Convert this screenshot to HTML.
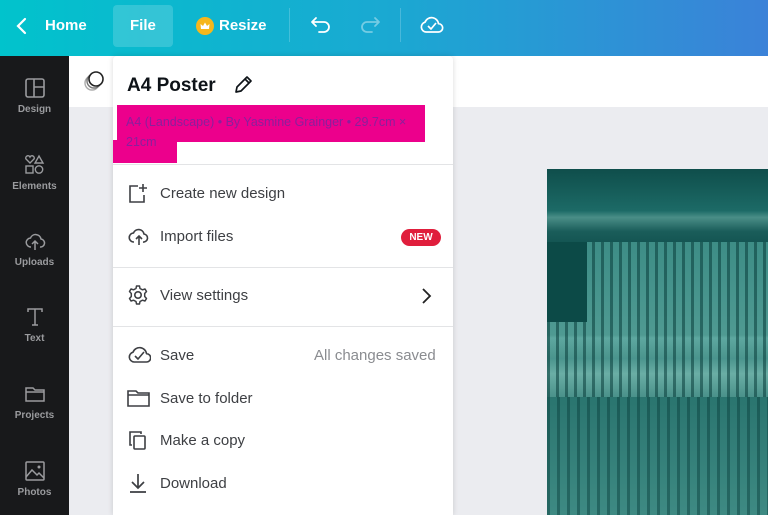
<!DOCTYPE html>
<html><head><style>
*{margin:0;padding:0;box-sizing:border-box}
body{width:768px;height:515px;overflow:hidden;font-family:"Liberation Sans",sans-serif;background:#ebecf0;position:relative}
.top{position:absolute;left:0;top:0;width:768px;height:56px;background:linear-gradient(90deg,#01c3cc 0%,#1aa9d2 50%,#3b82d8 100%)}
.top .t{position:absolute;color:#fff;font-weight:bold;font-size:15px;top:17px}
.side{position:absolute;left:0;top:56px;width:69px;height:459px;background:#18191b}
.si{position:absolute;left:0;width:69px;text-align:center;color:#9a9b9e;font-size:10px;font-weight:bold}
.si svg{display:block;margin:0 auto 4px}
.bar{position:absolute;left:69px;top:56px;width:699px;height:51px;background:#fff}
.img{position:absolute;left:547px;top:169px;width:221px;height:346px;overflow:hidden;background:linear-gradient(180deg,#0f4e4b 0%,#1c6a66 12%,#4a8e87 14%,#1a5d5a 18%,#0b4a47 26%,#2d7a74 28%)}
.roll{position:absolute;left:0;top:73px;width:221px;height:155px;background:
repeating-linear-gradient(90deg,rgba(8,60,58,.55) 0 3px,rgba(255,255,255,0) 3px 9px),
linear-gradient(180deg,#3d8d86 0%,#4f9a92 60%,#5ea8a0 62%,#4a948d 75%,#6aaea5 85%,#4a918a 100%)}
.roll2{position:absolute;left:0;top:228px;width:221px;height:118px;background:
repeating-linear-gradient(90deg,rgba(8,60,58,.45) 0 3px,rgba(255,255,255,0) 3px 10px),
linear-gradient(180deg,#2a756f,#3e8a83)}
.menu{position:absolute;left:113px;top:56px;width:340px;height:459px;background:#fff;box-shadow:0 0 6px rgba(0,0,0,.15);border-radius:4px 4px 0 0}
.it{position:absolute;left:0;width:340px;height:24px;font-size:15px;color:#3d3f43}
.it svg{position:absolute;left:14px;top:0}
.it span{position:absolute;left:47px;top:3px}
.hr{position:absolute;left:0;width:340px;height:1px;background:#e3e4e6}
</style></head><body>
<div class="top">
<svg style="position:absolute;left:15px;top:16px" width="14" height="20" viewBox="0 0 14 20"><path d="M10 3 L3 10 L10 17" fill="none" stroke="#fff" stroke-width="2.2" stroke-linecap="round"/></svg>
<div class="t" style="left:45px">Home</div>
<div style="position:absolute;left:113px;top:5px;width:60px;height:42px;background:rgba(255,255,255,.17);border-radius:4px"></div>
<div class="t" style="left:130px">File</div>
<div style="position:absolute;left:196px;top:17px;width:18px;height:18px;border-radius:50%;background:#f6b71c"><svg width="18" height="18" viewBox="0 0 18 18"><path d="M5 12 L4.5 7 L7 9 L9 5.5 L11 9 L13.5 7 L13 12Z" fill="#fff"/></svg></div>
<div class="t" style="left:219px">Resize</div>
<div style="position:absolute;left:289px;top:8px;width:1px;height:34px;background:rgba(255,255,255,.2)"></div>
<svg style="position:absolute;left:309px;top:14px" width="24" height="22" viewBox="0 0 24 22"><path d="M7 4 L3 8 L7 12 M3 8 H15 a5 5 0 0 1 0 10 H10" fill="none" stroke="#fff" stroke-width="1.8" stroke-linecap="round" stroke-linejoin="round"/></svg>
<svg style="position:absolute;left:358px;top:14px" width="24" height="22" viewBox="0 0 24 22"><path d="M17 4 L21 8 L17 12 M21 8 H9 a5 5 0 0 0 0 10 H14" fill="none" stroke="rgba(255,255,255,.4)" stroke-width="1.8" stroke-linecap="round" stroke-linejoin="round"/></svg>
<div style="position:absolute;left:400px;top:8px;width:1px;height:34px;background:rgba(255,255,255,.2)"></div>
<svg style="position:absolute;left:419px;top:14px" width="26" height="22" viewBox="0 0 26 22"><path d="M7 18 a5 5 0 0 1 -1 -9.8 a7 7 0 0 1 13.5 1.5 a4 4 0 0 1 0 8.3Z M9 12 L12 15 L17 9" fill="none" stroke="#fff" stroke-width="1.7" stroke-linejoin="round"/></svg>
</div>
<div class="side">
<div class="si" style="top:20px"><svg width="22" height="24" viewBox="0 0 22 22"><rect x="2" y="2" width="18" height="18" rx="2" fill="none" stroke="#9a9b9e" stroke-width="1.6"/><path d="M10 2V20M10 10H20" stroke="#9a9b9e" stroke-width="1.6"/></svg>Design</div>
<div class="si" style="top:97px"><svg width="22" height="24" viewBox="0 0 22 22"><path d="M6 9 L2 5 a2 2 0 0 1 4 -2 a2 2 0 0 1 4 2Z M15 2 L19 9 H11Z" fill="none" stroke="#9a9b9e" stroke-width="1.4"/><rect x="2" y="12" width="7" height="7" fill="none" stroke="#9a9b9e" stroke-width="1.4"/><circle cx="15" cy="15.5" r="3.7" fill="none" stroke="#9a9b9e" stroke-width="1.4"/></svg>Elements</div>
<div class="si" style="top:173px"><svg width="22" height="24" viewBox="0 0 22 22"><path d="M7 17 a4.5 4.5 0 0 1 -0.5 -9 a5.5 5.5 0 0 1 10.5 1 a4 4 0 0 1 -1 8 M11 20 V11 M8 14 L11 11 L14 14" fill="none" stroke="#9a9b9e" stroke-width="1.5"/></svg>Uploads</div>
<div class="si" style="top:249px"><svg width="22" height="24" viewBox="0 0 22 22"><path d="M4 6 V3 H18 V6 M11 3 V19 M8 19 H14" fill="none" stroke="#9a9b9e" stroke-width="1.5"/></svg>Text</div>
<div class="si" style="top:326px"><svg width="22" height="24" viewBox="0 0 22 22"><path d="M2 5 H9 L11 7 H20 V18 H2Z M2 9 H20" fill="none" stroke="#9a9b9e" stroke-width="1.5"/></svg>Projects</div>
<div class="si" style="top:403px"><svg width="22" height="24" viewBox="0 0 22 22"><rect x="2" y="2" width="18" height="18" rx="1" fill="none" stroke="#9a9b9e" stroke-width="1.5"/><path d="M2 17 L8 10 L13 15 L15 13 L20 18" fill="none" stroke="#9a9b9e" stroke-width="1.5"/><circle cx="15" cy="7" r="1.5" fill="#9a9b9e"/></svg>Photos</div>
</div>
<div class="bar"><svg style="position:absolute;left:14px;top:14px" width="24" height="22" viewBox="0 0 24 22"><circle cx="9" cy="13" r="7" fill="none" stroke="#aaa" stroke-width="1.4"/><circle cx="11" cy="11" r="7" fill="#fff" stroke="#777" stroke-width="1.4"/><circle cx="13" cy="9" r="7" fill="#fff" stroke="#222" stroke-width="1.6"/></svg></div>
<div class="img"><div class="roll"></div><div style="position:absolute;left:0;top:73px;width:40px;height:80px;background:#0c4a47"></div><div class="roll2"></div></div>
<div class="menu">
<div style="position:absolute;left:14px;top:19px;font-size:19px;font-weight:bold;color:#0e1318">A4 Poster</div>
<svg style="position:absolute;left:119px;top:18px" width="22" height="22" viewBox="0 0 22 22"><path d="M4 18 L5 13 L15 3 L19 7 L9 17Z M13 5 L17 9" fill="none" stroke="#0e1318" stroke-width="1.7" stroke-linejoin="round"/></svg>
<div style="position:absolute;left:4px;top:49px;width:308px;height:37px;background:#ec008c"></div>
<div style="position:absolute;left:0;top:84px;width:64px;height:23px;background:#ec008c"></div>
<div style="position:absolute;left:13px;top:56px;width:300px;font-size:12.5px;line-height:20px;color:#8a1f9c">A4 (Landscape) • By Yasmine Grainger • 29.7cm × 21cm</div>
<div class="hr" style="top:108px"></div>
<div class="it" style="top:126px"><svg width="22" height="22" viewBox="0 0 22 22"><path d="M11 4 H3 V20 H17 V13 M16 2 V10 M12 6 H20" fill="none" stroke="#3d3f43" stroke-width="1.6"/></svg><span>Create new design</span></div>
<div class="it" style="top:169px"><svg width="24" height="22" viewBox="0 0 24 22"><path d="M7 17 a4.5 4.5 0 0 1 -0.5 -9 a5.5 5.5 0 0 1 10.5 1 a4 4 0 0 1 -1 8 M12 20 V11 M9 14 L12 11 L15 14" fill="none" stroke="#3d3f43" stroke-width="1.6"/></svg><span>Import files</span>
<div style="position:absolute;left:288px;top:4px;width:40px;height:17px;border-radius:9px;background:#e01e3c;color:#fff;font-size:10px;font-weight:bold;text-align:center;line-height:17px">NEW</div></div>
<div class="hr" style="top:211px"></div>
<div class="it" style="top:228px"><svg width="22" height="22" viewBox="0 0 22 22"><circle cx="11" cy="11" r="3.2" fill="none" stroke="#3d3f43" stroke-width="1.6"/><path d="M9.5 2 H12.5 L13 4.5 L15.5 5.8 L18 5 L19.5 7.5 L17.7 9.5 V12.5 L19.5 14.5 L18 17 L15.5 16.2 L13 17.5 L12.5 20 H9.5 L9 17.5 L6.5 16.2 L4 17 L2.5 14.5 L4.3 12.5 V9.5 L2.5 7.5 L4 5 L6.5 5.8 L9 4.5Z" fill="none" stroke="#3d3f43" stroke-width="1.5" stroke-linejoin="round"/></svg><span>View settings</span>
<svg style="left:306px;top:3px" width="14" height="18" viewBox="0 0 14 18"><path d="M4 2 L11 9 L4 16" fill="none" stroke="#222" stroke-width="1.8"/></svg></div>
<div class="hr" style="top:270px"></div>
<div class="it" style="top:288px"><svg width="24" height="22" viewBox="0 0 24 22"><path d="M7 18 a5 5 0 0 1 -1 -9.8 a7 7 0 0 1 13.5 1.5 a4 4 0 0 1 0 8.3Z M8 12 L11 15 L17 8" fill="none" stroke="#3d3f43" stroke-width="1.6" stroke-linejoin="round"/></svg><span>Save</span><span style="left:201px;color:#8a8c90">All changes saved</span></div>
<div class="it" style="top:331px"><svg width="24" height="22" viewBox="0 0 24 22"><path d="M1 4 H9 L11 6 H22 V19 H1Z M1 8 H22" fill="none" stroke="#3d3f43" stroke-width="1.6"/></svg><span>Save to folder</span></div>
<div class="it" style="top:373px"><svg width="22" height="22" viewBox="0 0 22 22"><path d="M5 16 H3 V3 H14 V5" fill="none" stroke="#3d3f43" stroke-width="1.6"/><rect x="7" y="7" width="11" height="13" rx="1" fill="none" stroke="#3d3f43" stroke-width="1.6"/></svg><span>Make a copy</span></div>
<div class="it" style="top:416px"><svg width="22" height="22" viewBox="0 0 22 22"><path d="M11 2 V15 M5 10 L11 16 L17 10 M3 20 H19" fill="none" stroke="#3d3f43" stroke-width="1.7"/></svg><span>Download</span></div>
</div>
</body></html>
